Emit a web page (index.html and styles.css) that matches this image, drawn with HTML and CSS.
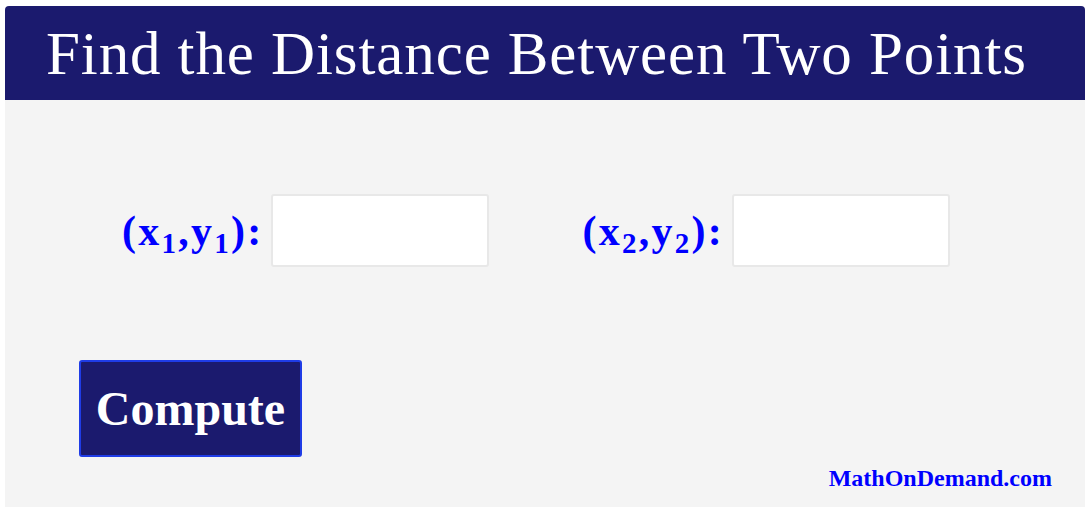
FILE: index.html
```html
<!DOCTYPE html>
<html lang="en">
<head>
    <meta charset="UTF-8">
    <title>Find the Distance Between Two Points</title>
    <link rel="stylesheet" href="styles.css">
</head>
<body>
    <div class="calc">
        <div class="calc-header">
            <h1>Find the Distance Between Two Points</h1>
        </div>
        <div class="calc-body">
            <div class="point-row">
                <div class="point">
                    <label for="p1">(x<sub>1</sub>,y<sub>1</sub>):</label>
                    <input type="text" id="p1">
                </div>
                <div class="point">
                    <label for="p2">(x<sub>2</sub>,y<sub>2</sub>):</label>
                    <input type="text" id="p2">
                </div>
            </div>
            <button class="compute-btn">Compute</button>
            <div class="brand">MathOnDemand.com</div>
        </div>
    </div>
</body>
</html>
```

FILE: styles.css
```css
body {
    margin: 0;
    padding: 6px 5px;
    background: #fff;
    font-family: "Liberation Serif", serif;
}

.calc {
    width: 1080px;
}

.calc-header {
    background: #1b1a6e;
    border-radius: 4px 4px 0 0;
    height: 94px;
    padding-left: 41px;
    box-sizing: border-box;
}

.calc-header h1 {
    margin: 0;
    color: #fff;
    font-weight: normal;
    font-size: 61px;
    letter-spacing: 0.9px;
    line-height: 96px;
}

.calc-body {
    background: #f4f4f4;
    height: 407px;
    box-sizing: border-box;
    padding: 94px 33px 0 74px;
    display: flex;
    flex-direction: column;
}

.point-row {
    display: flex;
    gap: 93px;
    padding-left: 43px;
}

.point {
    display: flex;
    align-items: center;
    gap: 8px;
}

.point label {
    color: #0000ff;
    font-size: 42px;
    font-weight: bold;
    letter-spacing: 2.25px;
}

.point sub {
    font-size: 29px;
    line-height: 0;
    vertical-align: -8px;
}

.point input {
    width: 218px;
    height: 73px;
    box-sizing: border-box;
    border: 2px solid #e8e8e8;
    border-radius: 3px;
    background: #fff;
    outline: none;
}

.compute-btn {
    align-self: flex-start;
    margin-top: 93px;
    width: 223px;
    height: 97px;
    background: #1b1a6e;
    border: 2px solid #1f3ce6;
    border-radius: 3px;
    color: #fff;
    font-family: "Liberation Serif", serif;
    font-weight: bold;
    font-size: 48px;
    padding: 0;
}

.brand {
    align-self: flex-end;
    margin-top: 8px;
    color: #0000ff;
    font-weight: bold;
    font-size: 24px;
}
```
